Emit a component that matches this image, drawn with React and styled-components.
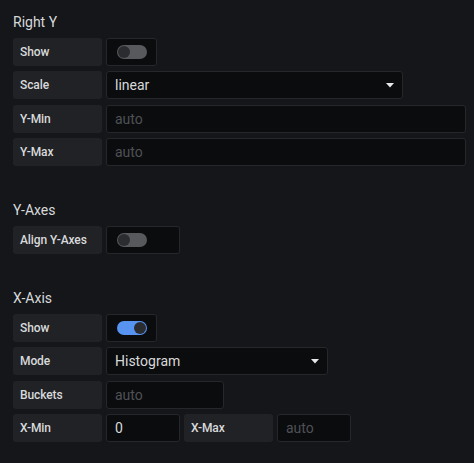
import styled, { createGlobalStyle } from "styled-components"

const Global = createGlobalStyle`
  html, body {
    margin: 0;
    background: #141619;
    font-family: "Roboto", "Liberation Sans", sans-serif;
    color: #d8d9da;
  }
`

const Page = styled.div`
  padding: 12px 8px 0 13px;
  min-height: 463px;
  box-sizing: border-box;
`

const Section = styled.div`
  margin-bottom: 34px;
`

const SectionTitle = styled.div`
  font-size: 14px;
  line-height: 20px;
  margin-bottom: 6px;
`

const Row = styled.div`
  display: flex;
  gap: 4px;
  height: 28px;
  margin-bottom: 5.33px;
`

const Label = styled.div`
  width: ${(p) => p.$w || 89}px;
  flex: none;
  background: #202226;
  border-radius: 3px;
  font-size: 12px;
  font-weight: 500;
  letter-spacing: -0.1px;
  display: flex;
  align-items: center;
  padding-left: 7px;
  box-sizing: border-box;
`

const Field = styled.div`
  width: ${(p) => p.$w}px;
  flex: none;
  box-sizing: border-box;
  background: #0b0c0e;
  border: 1px solid #25272b;
  border-radius: 3px;
  display: flex;
  align-items: center;
  padding: 0 8px 0 8px;
  font-size: 14px;
  color: ${(p) => (p.$placeholder ? "#4f5156" : "#d8d9da")};
`

const ToggleBox = styled(Field)`
  padding-left: 10px;
`

const Track = styled.div`
  width: 30px;
  height: 14px;
  border-radius: 7px;
  background: ${(p) => (p.$on ? "#5794f2" : "#58595c")};
  display: flex;
  align-items: center;
  justify-content: ${(p) => (p.$on ? "flex-end" : "flex-start")};
  padding: 0 1px;
  box-sizing: border-box;
`

const Thumb = styled.div`
  width: 12px;
  height: 12px;
  border-radius: 50%;
  background: #2b2c30;
`

const Value = styled.span`
  flex: 1;
`

const Caret = () => (
  <svg width="8" height="5" viewBox="0 0 8 5">
    <path d="M0 0 L8 0 L4 4.5 Z" fill="#e8e8e8" />
  </svg>
)

const Toggle = ({ on, w }) => (
  <ToggleBox $w={w}>
    <Track $on={on}>
      <Thumb />
    </Track>
  </ToggleBox>
)

const Select = ({ value, w }) => (
  <Field $w={w}>
    <Value>{value}</Value>
    <Caret />
  </Field>
)

export default function App() {
  return (
    <Page>
      <Global />
      <Section>
        <SectionTitle>Right Y</SectionTitle>
        <Row>
          <Label>Show</Label>
          <Toggle w={51} />
        </Row>
        <Row>
          <Label>Scale</Label>
          <Select value="linear" w={297} />
        </Row>
        <Row>
          <Label>Y-Min</Label>
          <Field $w={360} $placeholder>auto</Field>
        </Row>
        <Row>
          <Label>Y-Max</Label>
          <Field $w={360} $placeholder>auto</Field>
        </Row>
      </Section>

      <Section>
        <SectionTitle>Y-Axes</SectionTitle>
        <Row>
          <Label>Align Y-Axes</Label>
          <Toggle w={74} />
        </Row>
      </Section>

      <Section>
        <SectionTitle>X-Axis</SectionTitle>
        <Row>
          <Label>Show</Label>
          <Toggle on w={51} />
        </Row>
        <Row>
          <Label>Mode</Label>
          <Select value="Histogram" w={222} />
        </Row>
        <Row>
          <Label>Buckets</Label>
          <Field $w={118} $placeholder>auto</Field>
        </Row>
        <Row>
          <Label>X-Min</Label>
          <Field $w={74}>0</Field>
          <Label>X-Max</Label>
          <Field $w={74} $placeholder>auto</Field>
        </Row>
      </Section>
    </Page>
  )
}
